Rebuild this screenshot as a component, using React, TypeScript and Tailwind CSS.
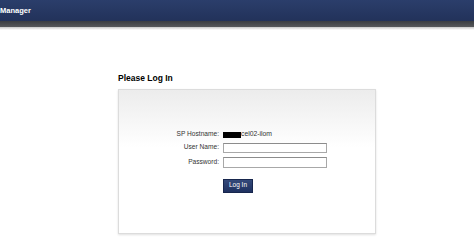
const font = { fontFamily: '"Liberation Sans", Arial, sans-serif' };

const FormRow = ({ label, children }: { label: string; children: React.ReactNode }) => (
  <>
    <div className="text-right text-[6.6px] leading-none text-[#333] self-center">{label}</div>
    <div className="flex items-center">{children}</div>
  </>
);

export default function App() {
  return (
    <div className="w-[474px] h-[249px] bg-white overflow-hidden" style={font}>
      {/* Masthead */}
      <div className="h-[21px] bg-gradient-to-b from-[#2b3e6b] to-[#22325a] flex items-center">
        <span className="text-white font-bold text-[7.5px] leading-none">Manager</span>
      </div>
      <div className="h-[6px] bg-gradient-to-b from-[#3a3d42] to-[#56585b]" />
      <div className="h-[3px] bg-gradient-to-b from-[#c8c8c8] to-white" />

      <div className="pl-[118px] pt-[44px]">
        <h1 className="text-[8.5px] font-bold text-black leading-none mb-[6px]">Please Log In</h1>

        {/* Login panel */}
        <div className="w-[258px] h-[145px] border border-[#dcdcdc] shadow-[0_1px_2px_rgba(0,0,0,0.12)] bg-gradient-to-b from-[#ececec] via-white via-40% to-white pt-[41px]">
          <div className="grid grid-cols-[100px_auto] gap-x-[4px] gap-y-[4px]">
            <FormRow label="SP Hostname:">
              <div className="flex items-center h-[8px]">
                <span className="inline-block w-[18px] h-[6px] bg-black" />
                <span className="text-[6.8px] leading-none text-[#333]">cel02-ilom</span>
              </div>
            </FormRow>
            <FormRow label="User Name:">
              <input
                type="text"
                className="w-[104px] h-[10px] border border-[#a8a8a8] border-t-[#8c8c8c] bg-white outline-none"
              />
            </FormRow>
            <FormRow label="Password:">
              <input
                type="password"
                className="w-[104px] h-[11px] border border-[#a8a8a8] border-t-[#8c8c8c] bg-white outline-none"
              />
            </FormRow>
            <div />
            <div className="flex pt-[7px]">
              <button className="w-[30px] h-[14px] bg-gradient-to-b from-[#34497a] to-[#1f3160] border border-[#17264d] text-white text-[6.5px] leading-none">
                Log In
              </button>
            </div>
          </div>
        </div>
      </div>
    </div>
  );
}
